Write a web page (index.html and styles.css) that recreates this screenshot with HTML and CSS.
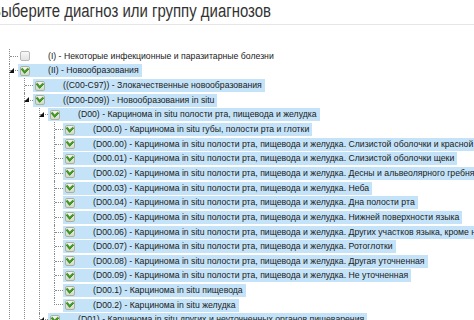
FILE: index.html
```html
<!DOCTYPE html>
<html lang="ru">
<head>
<meta charset="utf-8">
<title>Выберите диагноз</title>
<link rel="stylesheet" href="styles.css">
</head>
<body>
<svg class="defs" width="0" height="0" aria-hidden="true">
  <defs>
    <linearGradient id="boxg" x1="0" y1="0" x2="0" y2="1">
      <stop offset="0" stop-color="#f4f6f2"/>
      <stop offset="1" stop-color="#cfd8c8"/>
    </linearGradient>
    <linearGradient id="offg" x1="0" y1="0" x2="0" y2="1">
      <stop offset="0" stop-color="#fafafa"/>
      <stop offset="1" stop-color="#e2e2e2"/>
    </linearGradient>
    <symbol id="chk" viewBox="0 0 10 10">
      <rect x="0.5" y="0.5" width="9" height="9" rx="1.5" fill="url(#boxg)" stroke="#a9b3a2"/>
      <path d="M1.2 3.2 L4.6 7.4 L8.8 3.2 L7.6 2.2 L4.6 5.2 L2.4 2.2 Z" fill="#3fa516" stroke="#2a7410" stroke-width="0.7" stroke-linejoin="round"/>
    </symbol>
    <symbol id="unchk" viewBox="0 0 10 10">
      <rect x="0.5" y="0.5" width="9" height="9" rx="1.5" fill="url(#offg)" stroke="#b9b9b9"/>
    </symbol>
  </defs>
</svg>

<div class="title"><span class="title-text">Выберите диагноз или группу диагнозов</span></div>

<ul class="tree root">
  <li class="node">
    <div class="row"><span class="elbow"></span><a class="anchor"><svg class="cb"><use href="#unchk"/></svg><span class="txt">(I) - Некоторые инфекционные и паразитарные болезни</span></a></div>
  </li>
  <li class="node">
    <div class="row"><span class="elbow"><i class="tog"></i></span><a class="anchor sel"><svg class="cb"><use href="#chk"/></svg><span class="txt">(II) - Новообразования</span></a></div>
    <ul class="tree">
      <li class="node">
        <div class="row"><span class="elbow"></span><a class="anchor sel"><svg class="cb"><use href="#chk"/></svg><span class="txt">((C00-C97)) - Злокачественные новообразования</span></a></div>
      </li>
      <li class="node">
        <div class="row"><span class="elbow"><i class="tog"></i></span><a class="anchor sel"><svg class="cb"><use href="#chk"/></svg><span class="txt">((D00-D09)) - Новообразования in situ</span></a></div>
        <ul class="tree">
          <li class="node">
            <div class="row"><span class="elbow"><i class="tog"></i></span><a class="anchor sel"><svg class="cb"><use href="#chk"/></svg><span class="txt">(D00) - Карцинома in situ полости рта, пищевода и желудка</span></a></div>
            <ul class="tree">
              <li class="node"><div class="row"><span class="elbow"></span><a class="anchor sel"><svg class="cb"><use href="#chk"/></svg><span class="txt">(D00.0) - Карцинома in situ губы, полости рта и глотки</span></a></div></li>
              <li class="node"><div class="row"><span class="elbow"></span><a class="anchor sel"><svg class="cb"><use href="#chk"/></svg><span class="txt">(D00.00) - Карцинома in situ полости рта, пищевода и желудка. Слизистой оболочки и красной каймы губы</span></a></div></li>
              <li class="node"><div class="row"><span class="elbow"></span><a class="anchor sel"><svg class="cb"><use href="#chk"/></svg><span class="txt">(D00.01) - Карцинома in situ полости рта, пищевода и желудка. Слизистой оболочки щеки</span></a></div></li>
              <li class="node"><div class="row"><span class="elbow"></span><a class="anchor sel"><svg class="cb"><use href="#chk"/></svg><span class="txt">(D00.02) - Карцинома in situ полости рта, пищевода и желудка. Десны и альвеолярного гребня</span></a></div></li>
              <li class="node"><div class="row"><span class="elbow"></span><a class="anchor sel"><svg class="cb"><use href="#chk"/></svg><span class="txt">(D00.03) - Карцинома in situ полости рта, пищевода и желудка. Неба</span></a></div></li>
              <li class="node"><div class="row"><span class="elbow"></span><a class="anchor sel"><svg class="cb"><use href="#chk"/></svg><span class="txt">(D00.04) - Карцинома in situ полости рта, пищевода и желудка. Дна полости рта</span></a></div></li>
              <li class="node"><div class="row"><span class="elbow"></span><a class="anchor sel"><svg class="cb"><use href="#chk"/></svg><span class="txt">(D00.05) - Карцинома in situ полости рта, пищевода и желудка. Нижней поверхности языка</span></a></div></li>
              <li class="node"><div class="row"><span class="elbow"></span><a class="anchor sel"><svg class="cb"><use href="#chk"/></svg><span class="txt">(D00.06) - Карцинома in situ полости рта, пищевода и желудка. Других участков языка, кроме нижней поверхности</span></a></div></li>
              <li class="node"><div class="row"><span class="elbow"></span><a class="anchor sel"><svg class="cb"><use href="#chk"/></svg><span class="txt">(D00.07) - Карцинома in situ полости рта, пищевода и желудка. Ротоглотки</span></a></div></li>
              <li class="node"><div class="row"><span class="elbow"></span><a class="anchor sel"><svg class="cb"><use href="#chk"/></svg><span class="txt">(D00.08) - Карцинома in situ полости рта, пищевода и желудка. Другая уточненная</span></a></div></li>
              <li class="node"><div class="row"><span class="elbow"></span><a class="anchor sel"><svg class="cb"><use href="#chk"/></svg><span class="txt">(D00.09) - Карцинома in situ полости рта, пищевода и желудка. Не уточненная</span></a></div></li>
              <li class="node"><div class="row"><span class="elbow"></span><a class="anchor sel"><svg class="cb"><use href="#chk"/></svg><span class="txt">(D00.1) - Карцинома in situ пищевода</span></a></div></li>
              <li class="node last"><div class="row"><span class="elbow"></span><a class="anchor sel"><svg class="cb"><use href="#chk"/></svg><span class="txt">(D00.2) - Карцинома in situ желудка</span></a></div></li>
            </ul>
          </li>
          <li class="node">
            <div class="row"><span class="elbow"><i class="tog"></i></span><a class="anchor sel"><svg class="cb"><use href="#chk"/></svg><span class="txt">(D01) - Карцинома in situ других и неуточненных органов пищеварения</span></a></div>
          </li>
        </ul>
      </li>
    </ul>
  </li>
</ul>
</body>
</html>
```

FILE: styles.css
```css
* {
  box-sizing: border-box;
}

html, body {
  margin: 0;
  padding: 0;
  background: #ffffff;
}

body {
  width: 474px;
  height: 320px;
  overflow: hidden;
  font-family: "Liberation Sans", Arial, sans-serif;
}

.defs {
  position: absolute;
  width: 0;
  height: 0;
}

.title {
  height: 25px;
  border-bottom: 1px solid #e6e6e6;
  font-size: 18px;
  line-height: 22px;
  color: #333333;
  white-space: nowrap;
}

.title-text {
  display: inline-block;
  transform-origin: 0 0;
  transform: translateX(-9px) scaleX(0.83);
}

.tree {
  list-style: none;
  margin: 0;
  padding: 0;
}

.tree.root {
  margin: 24px 0 0 9px;
}

.tree .tree {
  margin-left: 14px;
}

.node {
  border-left: 1px dotted #8a8a8a;
}

.node.last {
  border-left-color: transparent;
}

.row {
  display: flex;
  align-items: center;
  height: 14.65px;
}

.elbow {
  position: relative;
  flex: none;
  align-self: stretch;
  width: 8px;
  display: flex;
  align-items: center;
}

.elbow::before {
  content: "";
  width: 8px;
  border-top: 1px dotted #8a8a8a;
}

.node.last > .row > .elbow {
  align-self: flex-start;
  height: 7.5px;
  margin-left: -1px;
  width: 9px;
  border-left: 1px dotted #8a8a8a;
  border-bottom: 1px dotted #8a8a8a;
}

.node.last > .row > .elbow::before {
  display: none;
}

.tog {
  position: absolute;
  left: -1px;
  top: 50%;
  margin-top: -3px;
  width: 0;
  height: 0;
  border-left: 5px solid transparent;
  border-bottom: 5px solid #111111;
}

.anchor {
  display: flex;
  align-items: center;
  height: 13px;
  padding: 0 3px 0 2px;
  font-size: 8.7px;
  color: #1a1a1a;
  white-space: nowrap;
}

.anchor.sel {
  background: #c4e3f8;
}

.cb {
  flex: none;
  width: 10px;
  height: 10px;
  margin-right: 18px;
}

.txt {
  line-height: 13px;
}
```
